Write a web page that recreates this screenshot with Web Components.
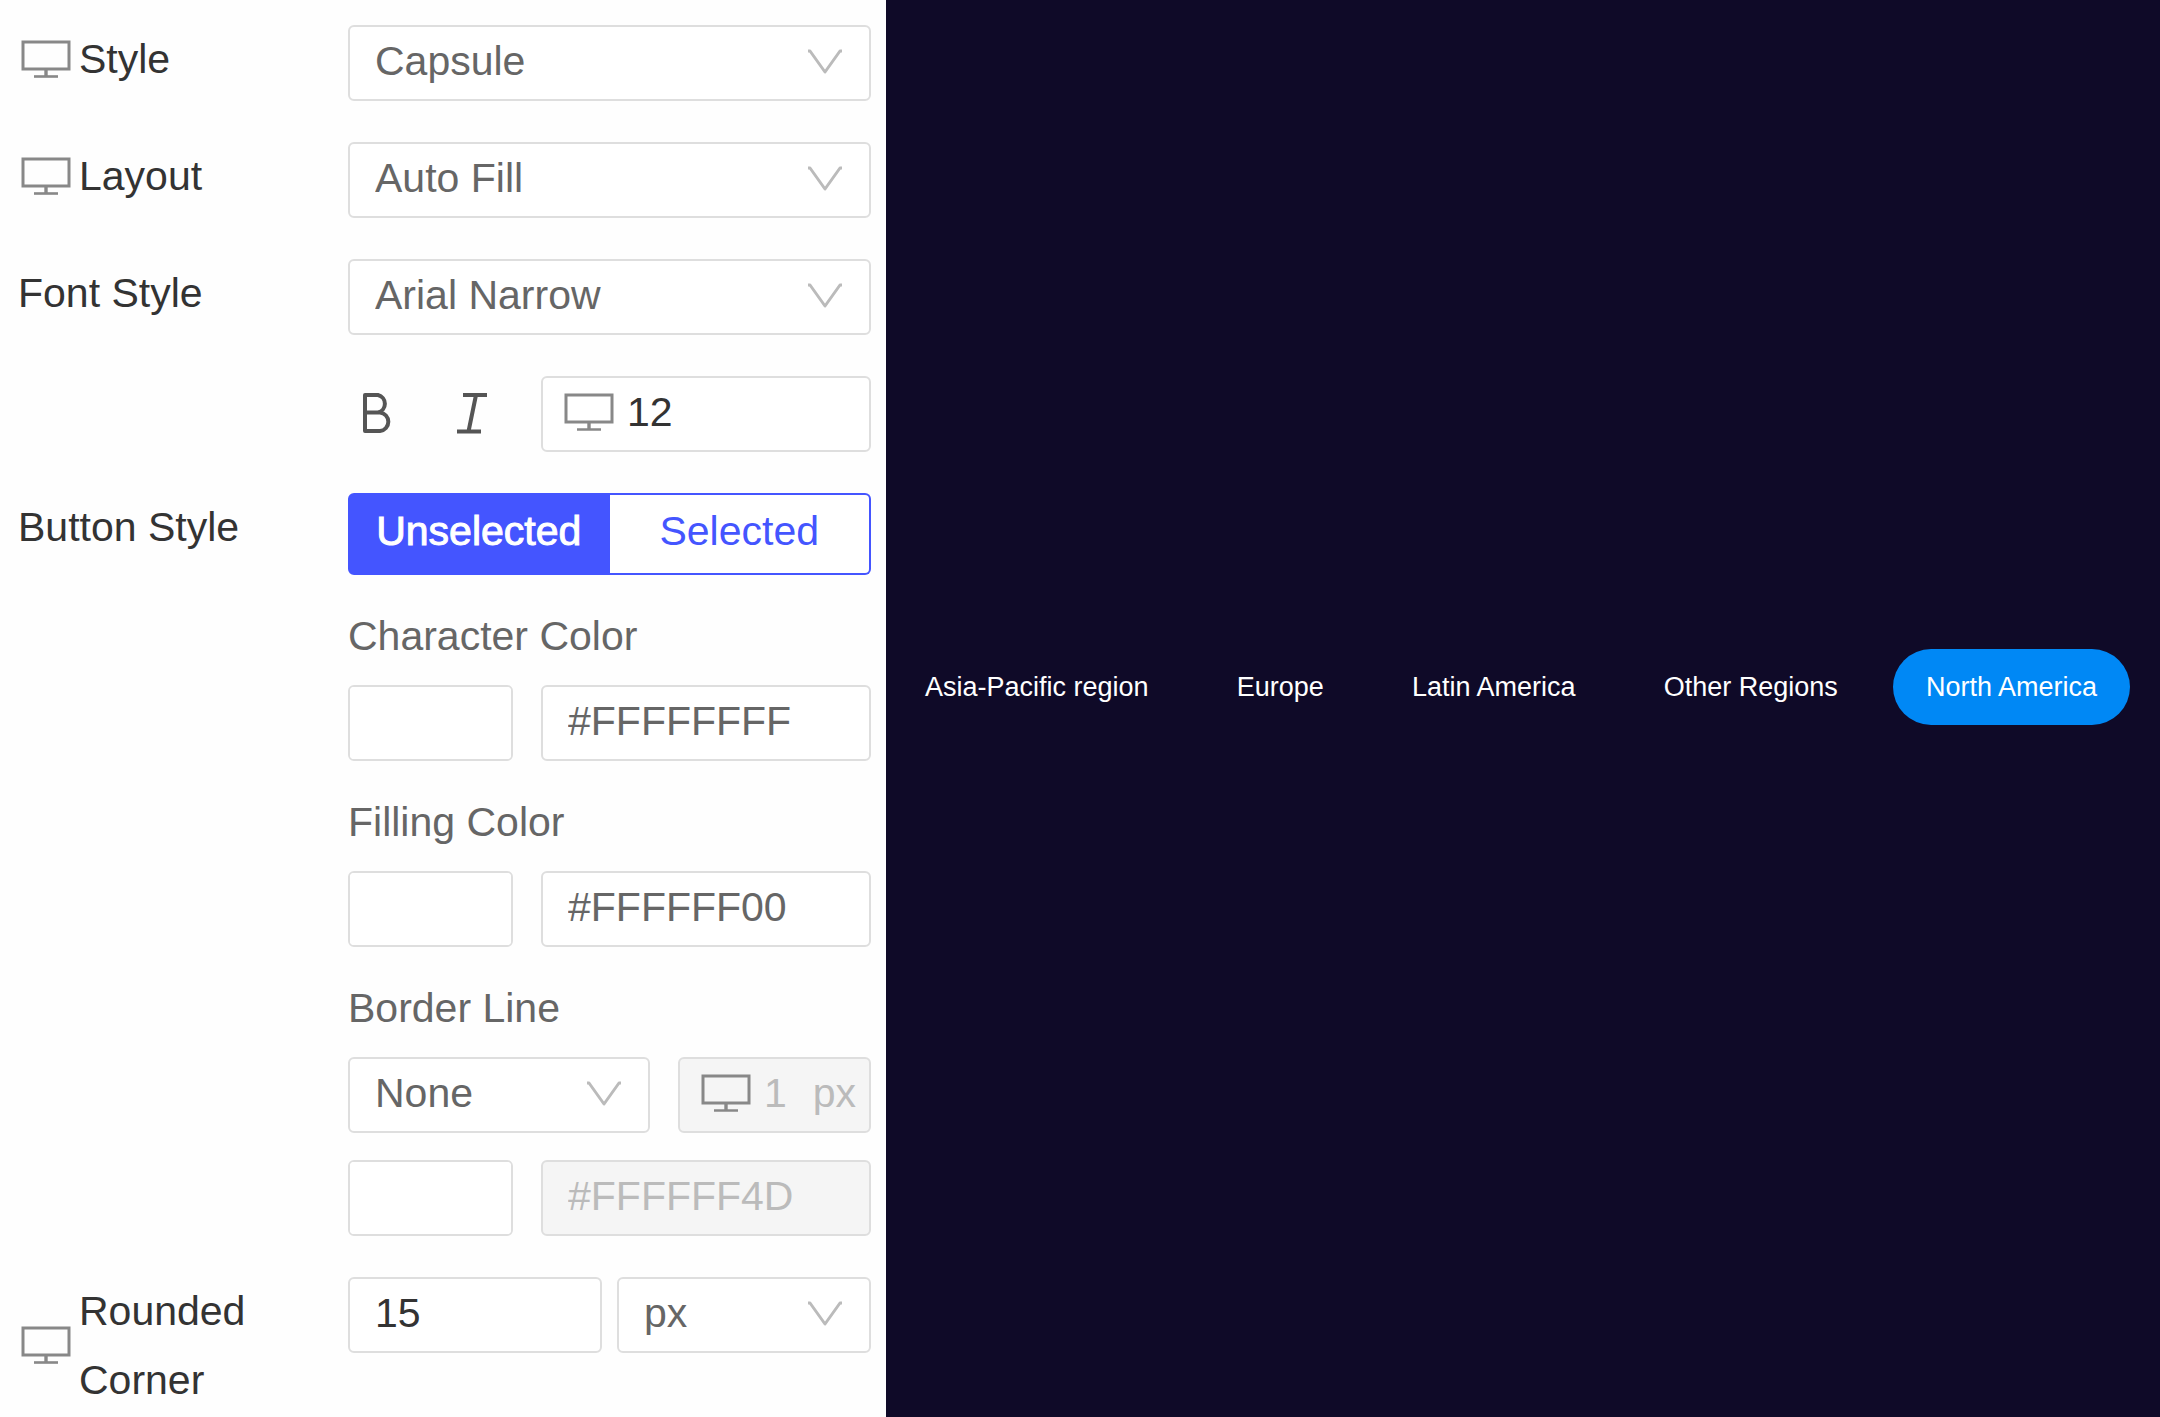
<!DOCTYPE html>
<html lang="en">
<head>
<meta charset="utf-8">
<title>Tab style settings</title>
<style>
  body { margin: 0; background: #fefefe; font-family: "Liberation Sans", Arial, sans-serif; }
</style>
</head>
<body>
<style-editor></style-editor>

<template id="t-editor">
  <style>
    :host { display: grid; grid-template-columns: 886px 1fr; min-height: 100vh; }
  </style>
  <settings-panel></settings-panel>
  <preview-stage>
    <capsule-tab>Asia-Pacific region</capsule-tab>
    <capsule-tab>Europe</capsule-tab>
    <capsule-tab>Latin America</capsule-tab>
    <capsule-tab>Other Regions</capsule-tab>
    <capsule-tab selected>North America</capsule-tab>
  </preview-stage>
</template>

<template id="t-monitor">
  <style>
    :host { display: block; flex: none; width: 61px; height: 40px; }
    svg { display: block; }
  </style>
  <svg width="61" height="40" viewBox="0 0 61 40" fill="none" stroke="#888" aria-hidden="true">
    <rect x="5" y="2" width="46" height="27" stroke-width="3"/>
    <path d="M28 30v6" stroke-width="3.4"/>
    <path d="M16 36.500h24" stroke-width="2.6"/>
  </svg>
</template>

<template id="t-row">
  <style>
    :host { display: grid; grid-template-columns: 330px 1fr; align-items: start; }
    .name { display: flex; align-items: center; line-height: 69px; color: #333; }
    .body { display: flex; flex-direction: column; gap: 27px; min-width: 0; }
  </style>
  <div class="name"><slot name="icon"></slot><slot name="label"></slot></div>
  <div class="body"><slot></slot></div>
</template>

<template id="t-group">
  <style>
    :host { display: flex; flex-direction: column; gap: 14px; line-height: 69px; color: #666; }
  </style>
  <slot></slot>
</template>

<template id="t-box">
  <style>
    :host {
      display: flex; align-items: center; box-sizing: border-box; height: 76px; min-width: 0;
      border: 2px solid #dedede; border-radius: 6px; background: #fff; color: #666; overflow: hidden;
    }
    :host([disabled]) { background: #f5f5f5; color: #bbb; }
    :host([strong]) { color: #333; }
    svg { display: none; flex: none; margin: 0 26px 2px -62px; pointer-events: none; }
    :host([dropdown]) svg { display: block; }
    slot[name=icon]::slotted(*) { margin: 0 -20px 3px 18px; }
    slot[name=suffix]::slotted(*) { margin-right: 13px; padding-bottom: 4px; line-height: 68px; }
  </style>
  <slot name="icon"></slot><slot></slot><slot name="suffix"></slot>
  <svg width="36" height="26" viewBox="0 0 36 26" fill="none" stroke="#bbb" stroke-width="3" stroke-linejoin="round" aria-hidden="true">
    <path d="M1 2h2L18 23 33 2h2"/>
  </svg>
</template>

<template id="t-panel">
  <style>
    :host {
      display: flex; flex-direction: column; gap: 41px; box-sizing: border-box;
      padding: 25px 15px 0 18px; font-size: 41px;
    }
    .line { display: flex; gap: 28px; }
    .line.tight { gap: 15px; }
    .line > * { flex: 1; }
    .line > .narrow { flex: 0 0 165px; }
    .line > .mid { flex: 0 0 302px; }
    select, input, button { font: inherit; color: inherit; margin: 0; border: 0; background: none; outline: 0; }
    select, input {
      appearance: none; flex: 1; width: 100%; min-width: 0; height: 72px; box-sizing: border-box;
      padding: 0 25px 4px; opacity: 1;
    }
    input:disabled { color: #bbb; }
    input[type=color] { padding: 0; }
    input[type=color]::-webkit-color-swatch-wrapper { padding: 0; }
    input[type=color]::-webkit-color-swatch { border: 0; }
    .marks { display: flex; flex: 0 0 165px; justify-content: space-between; align-items: center; padding-bottom: 3px; }
    .marks button { display: flex; padding: 0; }
    .marks button.b { padding: 0 14px; }
    .marks button.i { padding-right: 24px; }
    .switch { display: flex; height: 82px; }
    .switch button {
      flex: none; width: 50%; box-sizing: border-box; padding: 0 0 6px; color: #4455ff; background: #fff;
      border: 2px solid #4455ff; border-radius: 0 6px 6px 0;
    }
    .switch button[aria-pressed=true] {
      color: #fff; background: #4455ff; border-radius: 6px 0 0 6px; -webkit-text-stroke: 1px #fff;
    }
    .switch button + button { border-left: 0; }
    .two { width: 160px; }
  </style>

  <setting-row>
    <monitor-icon slot="icon"></monitor-icon>
    <label slot="label" for="style">Style</label>
    <field-box dropdown><select id="style"><option>Capsule</option></select></field-box>
  </setting-row>

  <setting-row>
    <monitor-icon slot="icon"></monitor-icon>
    <label slot="label" for="layout">Layout</label>
    <field-box dropdown><select id="layout"><option>Auto Fill</option></select></field-box>
  </setting-row>

  <setting-row>
    <label slot="label" for="font">Font Style</label>
    <field-box dropdown><select id="font"><option>Arial Narrow</option></select></field-box>
  </setting-row>

  <setting-row>
    <div class="line">
      <div class="marks">
        <button class="b" type="button" aria-label="Bold">
          <svg width="31" height="42" viewBox="0 0 31 42" fill="none" stroke="#555" stroke-width="4" stroke-linejoin="round"><path d="M3 3H16A9 9 0 0 1 16 20.500H3ZM3 20.500H18A9.300 9.300 0 0 1 18 39H3Z"/></svg>
        </button>
        <button class="i" type="button" aria-label="Italic">
          <svg width="33" height="42" viewBox="0 0 33 42" fill="none" stroke="#555" stroke-width="4"><path d="M7 3H31M1 39.500H25M20 3L12.500 39.500"/></svg>
        </button>
      </div>
      <field-box strong>
        <monitor-icon slot="icon"></monitor-icon>
        <input type="text" value="12" aria-label="Font size">
      </field-box>
    </div>
  </setting-row>

  <setting-row>
    <span slot="label" id="bs">Button Style</span>
    <div class="switch" role="group" aria-labelledby="bs">
      <button type="button" aria-pressed="true">Unselected</button>
      <button type="button" aria-pressed="false">Selected</button>
    </div>
    <field-group>
      <label for="char">Character Color</label>
      <div class="line">
        <field-box class="narrow"><input type="color" value="#ffffff" aria-label="Character color swatch"></field-box>
        <field-box><input id="char" type="text" value="#FFFFFFFF"></field-box>
      </div>
    </field-group>
    <field-group>
      <label for="fill">Filling Color</label>
      <div class="line">
        <field-box class="narrow"><input type="color" value="#ffffff" aria-label="Filling color swatch"></field-box>
        <field-box><input id="fill" type="text" value="#FFFFFF00"></field-box>
      </div>
    </field-group>
    <field-group>
      <label for="border">Border Line</label>
      <div class="line">
        <field-box class="mid" dropdown><select id="border"><option>None</option></select></field-box>
        <field-box disabled>
          <monitor-icon slot="icon"></monitor-icon>
          <input type="text" value="1" aria-label="Border width" disabled>
          <span slot="suffix">px</span>
        </field-box>
      </div>
    </field-group>
    <div class="line">
      <field-box class="narrow"><input type="color" value="#ffffff" aria-label="Border color swatch"></field-box>
      <field-box disabled><input type="text" value="#FFFFFF4D" aria-label="Border color" disabled></field-box>
    </div>
  </setting-row>

  <setting-row>
    <monitor-icon slot="icon"></monitor-icon>
    <label slot="label" class="two" for="radius">Rounded Corner</label>
    <div class="line tight">
      <field-box strong><input id="radius" type="text" value="15"></field-box>
      <field-box dropdown><select aria-label="Corner unit"><option>px</option></select></field-box>
    </div>
  </setting-row>
</template>

<template id="t-stage">
  <style>
    :host {
      display: flex; align-items: center; justify-content: space-between; box-sizing: border-box;
      padding: 0 30px 44px 6px; background: #0f0a28; color: #fff;
      font-size: 27px;
    }
  </style>
  <slot></slot>
</template>

<template id="t-tab">
  <style>
    :host { display: block; }
    button {
      display: block; height: 76px; margin: 0; padding: 2px 33px 0; border: 0; border-radius: 38px;
      background: none; color: inherit; font: inherit; white-space: nowrap;
    }
    :host([selected]) button { background: #0088f5; }
  </style>
  <button type="button"><slot></slot></button>
</template>

<script>
  const define = (name, id) => customElements.define(name, class extends HTMLElement {
    constructor() {
      super();
      this.attachShadow({ mode: "open" })
        .append(document.getElementById(id).content.cloneNode(true));
    }
  });
  define("monitor-icon", "t-monitor");
  define("field-box", "t-box");
  define("field-group", "t-group");
  define("setting-row", "t-row");
  define("settings-panel", "t-panel");
  define("capsule-tab", "t-tab");
  define("preview-stage", "t-stage");
  define("style-editor", "t-editor");
</script>
</body>
</html>
